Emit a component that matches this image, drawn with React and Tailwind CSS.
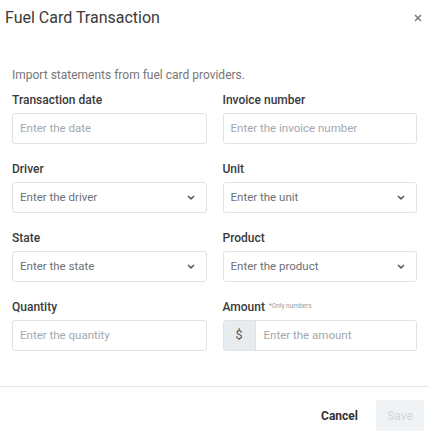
import React from 'react';

const Chevron = () => (
    <svg width="8" height="5" viewBox="0 0 8 5" className="shrink-0">
        <path d="M1 1l3 2.8L7 1" fill="none" stroke="#5a5a5a" strokeWidth="1.6" />
    </svg>
);

const Field = ({ label, children }) => (
    <div className="flex flex-col">
        <div className="h-4 mb-[5px] flex items-center text-[12px] font-medium text-[#3a3a3a]">{label}</div>
        {children}
    </div>
);

const TextBox = ({ placeholder }) => (
    <div className="h-[31px] border border-[#dfe3e7] rounded-[3px] bg-white flex items-center px-[7px] text-[11.5px] text-[#a3a9ae]">
        {placeholder}
    </div>
);

const SelectBox = ({ placeholder }) => (
    <div className="h-[31px] border border-[#dfe3e7] rounded-[3px] bg-white flex items-center justify-between pl-[7px] pr-[11px] text-[11.5px] text-[#6b7075]">
        <span>{placeholder}</span>
        <Chevron />
    </div>
);

export default function App() {
    return (
        <div className="w-[429px] h-[434px] bg-white overflow-hidden font-['Roboto',sans-serif]">
            {/* header */}
            <div className="h-9 flex items-center justify-between pl-[5px] pr-[7px]">
                <h1 className="text-[16px] text-[#3a3a3a]">Fuel Card Transaction</h1>
                <svg width="8" height="8" viewBox="0 0 8 8">
                    <path d="M1 1l6 6M7 1l-6 6" stroke="#777" strokeWidth="1.5" />
                </svg>
            </div>

            <div className="px-3 pt-[31px]">
                <p className="h-4 flex items-center text-[12px] text-[#777] mb-[9px]">Import statements from fuel card providers.</p>

                <div className="grid grid-cols-2 gap-x-[16px] gap-y-[17px]">
                    <Field label="Transaction date">
                        <TextBox placeholder="Enter the date" />
                    </Field>
                    <Field label="Invoice number">
                        <TextBox placeholder="Enter the invoice number" />
                    </Field>
                    <Field label="Driver">
                        <SelectBox placeholder="Enter the driver" />
                    </Field>
                    <Field label="Unit">
                        <SelectBox placeholder="Enter the unit" />
                    </Field>
                    <Field label="State">
                        <SelectBox placeholder="Enter the state" />
                    </Field>
                    <Field label="Product">
                        <SelectBox placeholder="Enter the product" />
                    </Field>
                    <Field label="Quantity">
                        <TextBox placeholder="Enter the quantity" />
                    </Field>
                    <Field
                        label={
                            <>
                                Amount <span className="ml-1 text-[6.5px] font-normal text-[#999]">*Only numbers</span>
                            </>
                        }
                    >
                        <div className="h-[31px] flex border border-[#dfe3e7] rounded-[3px] overflow-hidden">
                            <div className="w-8 bg-[#e9ecef] border-r border-[#dfe3e7] flex items-center justify-center text-[12.5px] text-[#4a5a6a]">$</div>
                            <div className="flex-1 flex items-center px-[8px] text-[11.5px] text-[#a3a9ae]">Enter the amount</div>
                        </div>
                    </Field>
                </div>
            </div>

            {/* footer */}
            <div className="mt-[35px] border-t border-[#e6e6e6] pt-[13px] flex justify-end items-center gap-[18px] pr-[5px]">
                <button className="text-[12px] font-bold text-[#333]">Cancel</button>
                <button className="w-[48px] h-[31px] rounded-[3px] bg-[#f0f3f5] text-[12px] text-[#d0d5d9]">Save</button>
            </div>
        </div>
    );
}
